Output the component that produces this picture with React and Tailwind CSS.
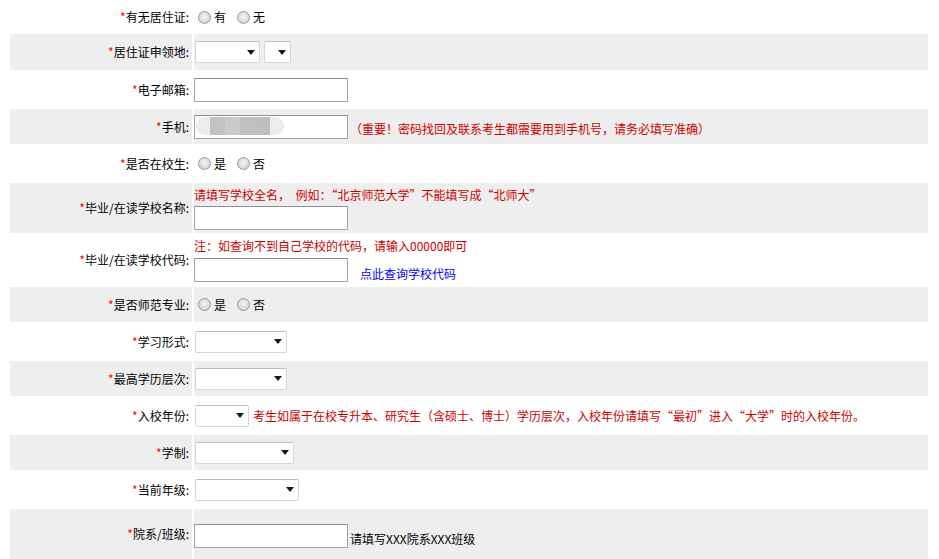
import React from "react"

const rows = [
  { label: "有无居住证", h: "h-[34px]", kind: "radio", opts: ["有", "无"] },
  { label: "居住证申领地", h: "h-[36px]", kind: "place" },
  { label: "电子邮箱", h: "h-[39px]", kind: "input" },
  { label: "手机", h: "h-[35px]", kind: "phone" },
  { label: "是否在校生", h: "h-[39px]", kind: "radio", opts: ["是", "否"] },
  { label: "毕业/在读学校名称", h: "h-[50px]", kind: "school" },
  { label: "毕业/在读学校代码", h: "h-[54px]", kind: "code" },
  { label: "是否师范专业", h: "h-[35px]", kind: "radio", opts: ["是", "否"] },
  { label: "学习形式", h: "h-[39px]", kind: "select", w: "w-[92px]" },
  { label: "最高学历层次", h: "h-[35px]", kind: "select", w: "w-[92px]" },
  { label: "入校年份", h: "h-[39px]", kind: "year" },
  { label: "学制", h: "h-[35px]", kind: "select", w: "w-[99px]" },
  { label: "当前年级", h: "h-[39px]", kind: "select", w: "w-[104px]" },
  { label: "院系/班级", h: "h-[50px]", kind: "dept" },
]

function Radio({ text }) {
  return (
    <span className="flex items-center">
      <span className="w-[13px] h-[13px] rounded-full border border-[#9a9a9a] bg-[radial-gradient(circle_at_50%_45%,#f4f4f4,#c9c9c9)]" />
      <span className="ml-[3px]">{text}</span>
    </span>
  )
}

function Select({ w, h = "h-[22px]" }) {
  return (
    <div className={`${w} ${h} ml-[1px] flex items-center justify-end pr-[4px] bg-white border border-[#d6d6d6] border-t-[#bdbdbd] rounded-[2px]`}>
      <svg width="8" height="5" viewBox="0 0 8 5">
        <path d="M0 0H8L4 5Z" fill="#1a1a1a" />
      </svg>
    </div>
  )
}

function TextInput({ children }) {
  return (
    <div className="relative w-[154px] h-[24px] bg-white border border-[#a3a3a3] border-t-[#8f8f8f]">{children}</div>
  )
}

function Cell({ row }) {
  switch (row.kind) {
    case "radio":
      return (
        <div className="flex items-center gap-[11px] pl-[4px]">
          <Radio text={row.opts[0]} />
          <Radio text={row.opts[1]} />
        </div>
      )
    case "place":
      return (
        <div className="flex items-center gap-[3px]">
          <Select w="w-[65px]" />
          <Select w="w-[27px]" />
        </div>
      )
    case "input":
      return <TextInput />
    case "phone":
      return (
        <div className="flex items-center">
          <TextInput>
            <div className="absolute left-[1px] top-[1px] w-[88px] h-[18px] rounded-full bg-[#ececec] flex items-center pl-[14px]">
              <span className="h-[18px] w-[15px] bg-[#c2c2c2]" />
              <span className="h-[18px] w-[15px] bg-[#cacac8]" />
              <span className="h-[18px] w-[15px] bg-[#c0c0c0]" />
              <span className="h-[18px] w-[15px] bg-[#bebebe]" />
            </div>
          </TextInput>
          <span className="ml-[2px] mt-[4px] text-[#cc0000]">（重要！密码找回及联系考生都需要用到手机号，请务必填写准确）</span>
        </div>
      )
    case "school":
      return (
        <div className="flex flex-col gap-[3px]">
          <span className="text-[#cc0000] whitespace-pre">请填写学校全名，  例如：“北京师范大学”不能填写成“北师大”</span>
          <TextInput />
        </div>
      )
    case "code":
      return (
        <div className="flex flex-col gap-[4px]">
          <span className="text-[#cc0000]">注：如查询不到自己学校的代码，请输入00000即可</span>
          <div className="flex items-end">
            <TextInput />
            <a className="ml-[12px] text-[#0000ff] cursor-pointer">点此查询学校代码</a>
          </div>
        </div>
      )
    case "select":
      return <Select w={row.w} />
    case "year":
      return (
        <div className="flex items-center">
          <Select w="w-[54px]" />
          <span className="ml-[4px] text-[#cc0000]">
            考生如属于在校专升本、研究生（含硕士、博士）学历层次，入校年份请填写“最初”进入“大学”时的入校年份。
          </span>
        </div>
      )
    case "dept":
      return (
        <div className="flex items-center pt-[4px]">
          <TextInput />
          <span className="ml-[2px] mt-[6px]">请填写XXX院系XXX班级</span>
        </div>
      )
    default:
      return null
  }
}

export default function App() {
  return (
    <div className="w-[939px] h-[559px] overflow-hidden bg-white font-['Noto_Sans_CJK_SC','Noto_Sans',sans-serif] text-[12px] leading-[16px] text-black">
      <div className="ml-[10px] w-[918px] flex flex-col">
        {rows.map((row, i) => (
          <div key={row.label} className={`flex gap-[2px] ${row.h}`}>
            <div className={`w-[182px] flex items-center justify-end pr-[3px] ${i % 2 ? "bg-[#eeeeee]" : "bg-white"}`}>
              <span className="text-[#ff0000]">*</span>
              {row.label}:
            </div>
            <div className={`flex-1 flex items-center ${i % 2 ? "bg-[#eeeeee]" : "bg-white"}`}>
              <Cell row={row} />
            </div>
          </div>
        ))}
      </div>
    </div>
  )
}
